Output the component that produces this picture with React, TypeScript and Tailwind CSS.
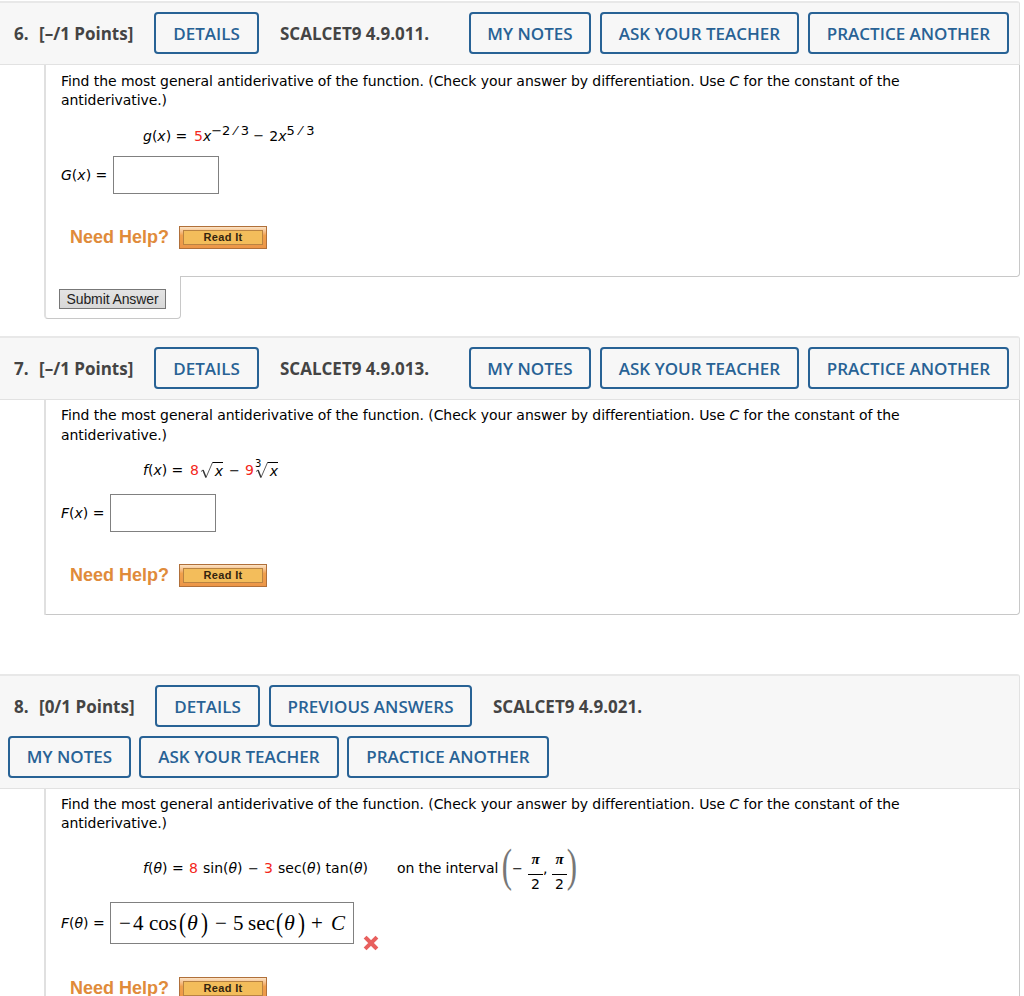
import type { ReactNode } from "react";

const buttonBase =
  "box-border flex h-[42px] shrink-0 items-center justify-center rounded-[4px] border-2 border-[#286295] bg-[#f7f7f7] font-['Open_Sans',sans-serif] text-[17px] font-semibold leading-none text-[#286295] whitespace-nowrap";

function HeaderButton({
  children,
  className,
}: {
  children: ReactNode;
  className: string;
}) {
  return (
    <button type="button" className={`${buttonBase} ${className}`}>
      {children}
    </button>
  );
}

function Label({
  children,
  className,
}: {
  children: ReactNode;
  className: string;
}) {
  return (
    <span
      className={`shrink-0 font-['Open_Sans',sans-serif] text-[17px] font-bold leading-none whitespace-nowrap text-[#444] ${className}`}
    >
      {children}
    </span>
  );
}

function ShortHeader({ number, code }: { number: string; code: string }) {
  return (
    <header className="flex h-[64px] w-[1020px] items-start rounded-tr-[3px] border-t-2 border-r border-b border-[#e2e2e2] border-t-[#e8e8e8] bg-[#f7f7f7] pt-[9px]">
      <div className="flex h-[42px] items-center">
        <Label className="ml-[14px] w-[25px]">{number}</Label>
        <Label className="w-[115px]">[–/1 Points]</Label>
        <HeaderButton className="w-[105px]">DETAILS</HeaderButton>
        <Label className="ml-[21px] w-[189px]">{code}</Label>
        <HeaderButton className="w-[122px]">MY NOTES</HeaderButton>
        <HeaderButton className="ml-[9px] w-[199px]">
          ASK YOUR TEACHER
        </HeaderButton>
        <HeaderButton className="ml-[9px] w-[201px]">
          PRACTICE ANOTHER
        </HeaderButton>
      </div>
    </header>
  );
}

function Prompt({ className }: { className: string }) {
  return (
    <p
      className={`h-[39px] pl-[15px] text-[14px] tracking-[-0.064px] whitespace-nowrap ${className}`}
    >
      Find the most general antiderivative of the function. (Check your answer
      by differentiation. Use <i>C</i> for the constant of the
      <br />
      antiderivative.)
    </p>
  );
}

function NeedHelp() {
  return (
    <div className="flex h-[24px] items-center pl-[24px]">
      <span className="w-[109px] font-['Liberation_Sans',sans-serif] text-[18px] leading-none font-bold whitespace-nowrap text-[#e08b3a]">
        Need Help?
      </span>
      <button
        type="button"
        className="h-[23px] w-[88px] border border-[#b0703a] bg-linear-to-b from-[#fbe3c6] via-[#f0a04c] via-40% to-[#ec9648] p-[3px]"
      >
        <span className="flex h-[15px] items-center justify-center border border-[#b98342] bg-[#f3bd5b] pt-px font-['Liberation_Sans',sans-serif] text-[11px] leading-none font-bold tracking-[0.35px] text-[#33240f]">
          Read It
        </span>
      </button>
    </div>
  );
}

function Radical({ root }: { root?: string }) {
  return (
    <span className="relative inline-flex h-[18px] w-[24px] shrink-0 items-end justify-end">
      <svg
        className="absolute inset-0"
        width="24"
        height="18"
        viewBox="0 0 24 18"
        fill="none"
        stroke="#333"
      >
        <path d="M1 10.5 L3 9" strokeWidth="0.8" />
        <path d="M3 9 L6 16.5" strokeWidth="1.5" />
        <path d="M6 16.5 L12.5 1.5" strokeWidth="0.8" />
        <path d="M12.5 1.5 H23" stroke="#000" />
      </svg>
      {root ? (
        <span className="absolute top-[-2px] left-[0px] text-[10px] leading-none">
          {root}
        </span>
      ) : null}
      <i className="pr-[1px] text-[14px] leading-[16px]">x</i>
    </span>
  );
}

function Fraction() {
  return (
    <span className="mt-[6px] flex w-[15px] shrink-0 flex-col items-center">
      <i className="h-[25px] font-['Liberation_Serif',serif] text-[15px] leading-[21px] font-bold">
        π
      </i>
      <span className="h-px w-full bg-black" />
      <span className="text-[14px] leading-[18px]">2</span>
    </span>
  );
}

// Stretched delimiter around the interval
function TallParen({ children }: { children: ReactNode }) {
  return (
    <span className="flex w-[10px] shrink-0 -translate-y-[2px] scale-x-[0.67] justify-center font-['Liberation_Serif',serif] text-[46px] leading-none text-[#777]">
      {children}
    </span>
  );
}

function AnswerParen({ children }: { children: ReactNode }) {
  return (
    <span className="inline-block w-[8px] origin-center scale-y-125">
      {children}
    </span>
  );
}

function EmptyAnswer() {
  return <div className="h-[38px] w-[106px] border border-[#808080]" />;
}

export default function App() {
  return (
    <main className="h-[996px] w-[1024px] overflow-hidden bg-white pt-px font-['DejaVu_Sans',sans-serif] text-[14px] text-black">
      <section className="h-[335px]">
        <ShortHeader number="6." code="SCALCET9 4.9.011." />
        <div className="ml-[44px] h-[212px] w-[976px] rounded-br-[4px] border-r border-b border-l-2 border-[#c8c8c8] border-l-[#e0e0e0] pt-[7px]">
          <Prompt className="leading-[19px]" />
          <div className="flex h-[38px] items-center pt-[11px] pl-[97px] leading-none whitespace-nowrap">
            <span className="w-[51px]">
              <i>g</i>(<i>x</i>) =
            </span>
            <span className="text-[#f32620]">5</span>
            <i>x</i>
            <span className="mb-[10px] w-[42px] text-[13px]">−2 ⁄ 3</span>
            <span className="w-[16px] text-[13px]">−</span>
            <span>2</span>
            <i>x</i>
            <span className="mb-[10px] text-[13px] tracking-[0.3px]">
              5 ⁄ 3
            </span>
          </div>
          <div className="mt-[7px] flex items-center pl-[15px]">
            <span className="w-[52px]">
              <i>G</i>(<i>x</i>) =
            </span>
            <EmptyAnswer />
          </div>
          <div className="mt-[31px]">
            <NeedHelp />
          </div>
        </div>
        <div className="relative -mt-px ml-[44px] h-[43px] w-[137px] rounded-b-[4px] border-r border-b border-l-2 border-[#c8c8c8] border-l-[#e0e0e0] bg-white pt-[13px] pl-[13px]">
          <button
            type="button"
            className="h-[20px] w-[107px] border border-[#777] bg-linear-to-b from-[#e4e4e4] to-[#d8d8d8] font-['Liberation_Sans',sans-serif] text-[14px] leading-none tracking-[-0.1px] whitespace-nowrap text-[#222]"
          >
            Submit Answer
          </button>
        </div>
      </section>

      <section className="h-[338px]">
        <ShortHeader number="7." code="SCALCET9 4.9.013." />
        <div className="ml-[44px] h-[215px] w-[976px] rounded-br-[4px] border-r border-b border-l-2 border-[#c8c8c8] border-l-[#e0e0e0] pt-[6px]">
          <Prompt className="leading-[19.5px]" />
          <div className="flex h-[38px] items-center pt-[12px] pl-[97px] leading-none whitespace-nowrap">
            <span className="w-[47px]">
              <i>f</i>(<i>x</i>) =
            </span>
            <span className="w-[10px] text-[#f32620]">8</span>
            <Radical />
            <span className="w-[21px] text-center text-[13px]">−</span>
            <span className="w-[10px] text-[#f32620]">9</span>
            <Radical root="3" />
          </div>
          <div className="mt-[11px] flex items-center pl-[15px]">
            <span className="w-[49px]">
              <i>F</i>(<i>x</i>) =
            </span>
            <EmptyAnswer />
          </div>
          <div className="mt-[31px]">
            <NeedHelp />
          </div>
        </div>
      </section>

      <section>
        <header className="h-[115px] w-[1020px] rounded-tr-[3px] border-t-2 border-r border-b border-[#e2e2e2] border-t-[#e8e8e8] bg-[#f7f7f7] pt-[9px]">
          <div className="flex h-[42px] items-center">
            <Label className="ml-[14px] w-[25px]">8.</Label>
            <Label className="w-[116px]">[0/1 Points]</Label>
            <HeaderButton className="w-[105px]">DETAILS</HeaderButton>
            <HeaderButton className="ml-[9px] w-[203px]">
              PREVIOUS ANSWERS
            </HeaderButton>
            <Label className="ml-[21px]">SCALCET9 4.9.021.</Label>
          </div>
          <div className="mt-[9px] ml-[8px] flex">
            <HeaderButton className="w-[123px] pb-px">MY NOTES</HeaderButton>
            <HeaderButton className="ml-[8px] w-[200px] pb-px">
              ASK YOUR TEACHER
            </HeaderButton>
            <HeaderButton className="ml-[8px] w-[202px] pb-px">
              PRACTICE ANOTHER
            </HeaderButton>
          </div>
        </header>
        <div className="ml-[44px] h-[240px] w-[976px] border-r border-l-2 border-[#c8c8c8] border-l-[#e0e0e0] pt-[6px]">
          <Prompt className="leading-[19px]" />
          <div className="mt-[12px] flex h-[44px] items-center pl-[97px] leading-none whitespace-nowrap">
            <span className="w-[46px]">
              <i>f</i>(<i>θ</i>) =
            </span>
            <span className="w-[14px] text-[#f32620]">8</span>
            <span className="w-[45px]">
              sin(<i>θ</i>)
            </span>
            <span className="w-[16px] text-[13px]">−</span>
            <span className="w-[14px] text-[#f32620]">3</span>
            <span className="w-[119px]">
              sec(<i>θ</i>) tan(<i>θ</i>)
            </span>
            <span className="w-[105px] tracking-[-0.1px]">on the interval</span>
            <TallParen>(</TallParen>
            <span className="w-[16px] text-[13px]">−</span>
            <Fraction />
            <span className="w-[9px]">,</span>
            <Fraction />
            <TallParen>)</TallParen>
          </div>
          <div className="mt-[12px] flex h-[42px] items-center pl-[15px]">
            <span className="w-[49px]">
              <i>F</i>(<i>θ</i>) =
            </span>
            <div className="flex h-[42px] w-[244px] items-center border border-[#808080] pl-[8px] font-['Liberation_Serif',serif] text-[21px] leading-none whitespace-nowrap">
              <span className="w-[14px]">−</span>
              <span className="w-[16px]">4</span>
              <span className="w-[30px]">cos</span>
              <AnswerParen>(</AnswerParen>
              <i className="w-[14px] text-[22px]">θ</i>
              <AnswerParen>)</AnswerParen>
              <span className="w-[24px] pl-[6px]">−</span>
              <span className="w-[15px]">5</span>
              <span className="w-[28px]">sec</span>
              <AnswerParen>(</AnswerParen>
              <i className="w-[14px] text-[22px]">θ</i>
              <AnswerParen>)</AnswerParen>
              <span className="w-[25px] pl-[5px]">+</span>
              <i>C</i>
            </div>
            <svg
              className="mt-[40px] ml-[9px] shrink-0"
              width="16"
              height="16"
              viewBox="0 0 16 16"
            >
              <path
                d="M3.5 3.5 L12.5 12.5 M12.5 3.5 L3.5 12.5"
                stroke="#e8605e"
                strokeWidth="4"
                strokeLinecap="square"
              />
            </svg>
          </div>
          <div className="mt-[32px]">
            <NeedHelp />
          </div>
        </div>
      </section>
    </main>
  );
}
